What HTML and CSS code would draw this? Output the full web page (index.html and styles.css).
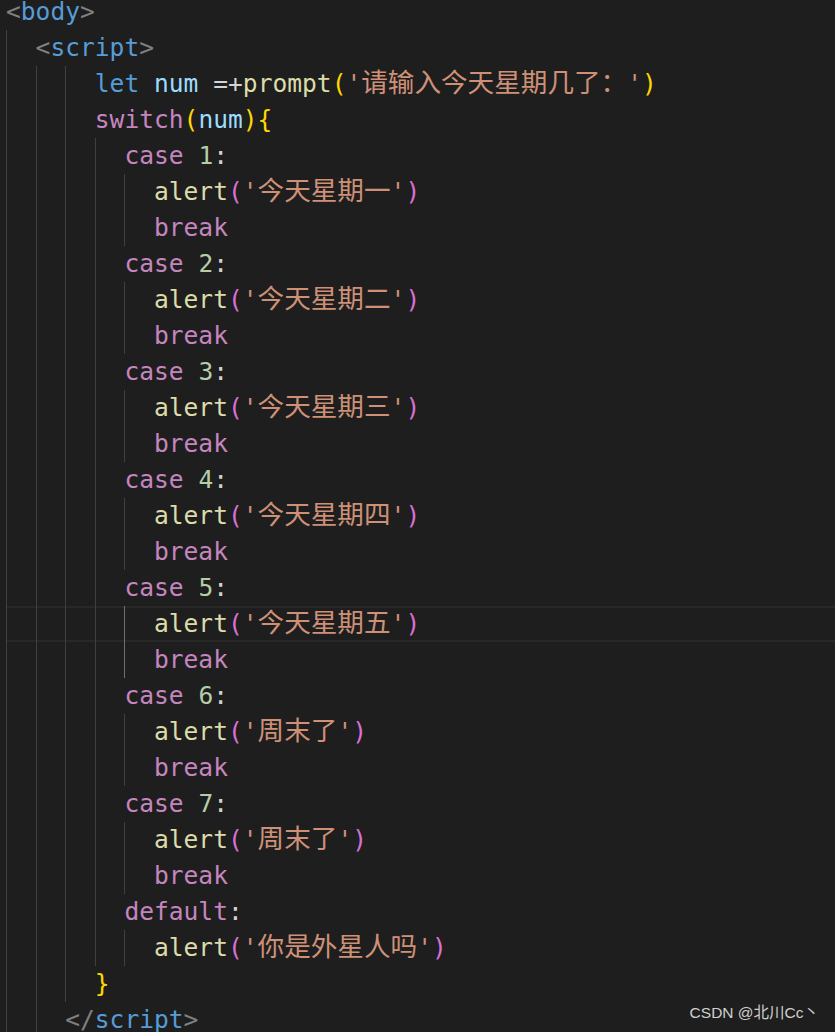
FILE: index.html
```html
<!DOCTYPE html>
<html>
<head>
<meta charset="utf-8">
<link rel="stylesheet" href="styles.css">
</head>
<body>
<div class="editor">
  <div class="ln"><span class="pu">&lt;</span><span class="tg">body</span><span class="pu">&gt;</span></div>
  <div class="ln"><span class="ig"></span><span class="pu">&lt;</span><span class="tg">script</span><span class="pu">&gt;</span></div>
  <div class="ln"><span class="ig"></span><span class="ig"></span><span class="ig"></span><span class="kw">let</span> <span class="vr">num</span> <span class="op">=+</span><span class="fn">prompt</span><span class="b1">(</span><span class="st">'<span class="cjk">请输入今天星期几了：</span>'</span><span class="b1">)</span></div>
  <div class="ln"><span class="ig"></span><span class="ig"></span><span class="ig"></span><span class="ck">switch</span><span class="b1">(</span><span class="vr">num</span><span class="b1">)</span><span class="b1">{</span></div>
  <div class="ln"><span class="ig"></span><span class="ig"></span><span class="ig"></span><span class="ig"></span><span class="ck">case</span> <span class="nm">1</span><span class="op">:</span></div>
  <div class="ln"><span class="ig"></span><span class="ig"></span><span class="ig"></span><span class="ig"></span><span class="ig"></span><span class="fn">alert</span><span class="b2">(</span><span class="st">'<span class="cjk">今天星期一</span>'</span><span class="b2">)</span></div>
  <div class="ln"><span class="ig"></span><span class="ig"></span><span class="ig"></span><span class="ig"></span><span class="ig"></span><span class="ck">break</span></div>
  <div class="ln"><span class="ig"></span><span class="ig"></span><span class="ig"></span><span class="ig"></span><span class="ck">case</span> <span class="nm">2</span><span class="op">:</span></div>
  <div class="ln"><span class="ig"></span><span class="ig"></span><span class="ig"></span><span class="ig"></span><span class="ig"></span><span class="fn">alert</span><span class="b2">(</span><span class="st">'<span class="cjk">今天星期二</span>'</span><span class="b2">)</span></div>
  <div class="ln"><span class="ig"></span><span class="ig"></span><span class="ig"></span><span class="ig"></span><span class="ig"></span><span class="ck">break</span></div>
  <div class="ln"><span class="ig"></span><span class="ig"></span><span class="ig"></span><span class="ig"></span><span class="ck">case</span> <span class="nm">3</span><span class="op">:</span></div>
  <div class="ln"><span class="ig"></span><span class="ig"></span><span class="ig"></span><span class="ig"></span><span class="ig"></span><span class="fn">alert</span><span class="b2">(</span><span class="st">'<span class="cjk">今天星期三</span>'</span><span class="b2">)</span></div>
  <div class="ln"><span class="ig"></span><span class="ig"></span><span class="ig"></span><span class="ig"></span><span class="ig"></span><span class="ck">break</span></div>
  <div class="ln"><span class="ig"></span><span class="ig"></span><span class="ig"></span><span class="ig"></span><span class="ck">case</span> <span class="nm">4</span><span class="op">:</span></div>
  <div class="ln"><span class="ig"></span><span class="ig"></span><span class="ig"></span><span class="ig"></span><span class="ig"></span><span class="fn">alert</span><span class="b2">(</span><span class="st">'<span class="cjk">今天星期四</span>'</span><span class="b2">)</span></div>
  <div class="ln"><span class="ig"></span><span class="ig"></span><span class="ig"></span><span class="ig"></span><span class="ig"></span><span class="ck">break</span></div>
  <div class="ln"><span class="ig"></span><span class="ig"></span><span class="ig"></span><span class="ig"></span><span class="ck">case</span> <span class="nm">5</span><span class="op">:</span></div>
  <div class="ln cur"><span class="ig"></span><span class="ig"></span><span class="ig"></span><span class="ig"></span><span class="ig act"></span><span class="fn">alert</span><span class="b2">(</span><span class="st">'<span class="cjk">今天星期五</span>'</span><span class="b2">)</span></div>
  <div class="ln"><span class="ig"></span><span class="ig"></span><span class="ig"></span><span class="ig"></span><span class="ig act"></span><span class="ck">break</span></div>
  <div class="ln"><span class="ig"></span><span class="ig"></span><span class="ig"></span><span class="ig"></span><span class="ck">case</span> <span class="nm">6</span><span class="op">:</span></div>
  <div class="ln"><span class="ig"></span><span class="ig"></span><span class="ig"></span><span class="ig"></span><span class="ig"></span><span class="fn">alert</span><span class="b2">(</span><span class="st">'<span class="cjk">周末了</span>'</span><span class="b2">)</span></div>
  <div class="ln"><span class="ig"></span><span class="ig"></span><span class="ig"></span><span class="ig"></span><span class="ig"></span><span class="ck">break</span></div>
  <div class="ln"><span class="ig"></span><span class="ig"></span><span class="ig"></span><span class="ig"></span><span class="ck">case</span> <span class="nm">7</span><span class="op">:</span></div>
  <div class="ln"><span class="ig"></span><span class="ig"></span><span class="ig"></span><span class="ig"></span><span class="ig"></span><span class="fn">alert</span><span class="b2">(</span><span class="st">'<span class="cjk">周末了</span>'</span><span class="b2">)</span></div>
  <div class="ln"><span class="ig"></span><span class="ig"></span><span class="ig"></span><span class="ig"></span><span class="ig"></span><span class="ck">break</span></div>
  <div class="ln"><span class="ig"></span><span class="ig"></span><span class="ig"></span><span class="ig"></span><span class="ck">default</span><span class="op">:</span></div>
  <div class="ln"><span class="ig"></span><span class="ig"></span><span class="ig"></span><span class="ig"></span><span class="ig"></span><span class="fn">alert</span><span class="b2">(</span><span class="st">'<span class="cjk">你是外星人吗</span>'</span><span class="b2">)</span></div>
  <div class="ln"><span class="ig"></span><span class="ig"></span><span class="ig"></span><span class="b1">}</span></div>
  <div class="ln"><span class="ig"></span><span class="ig"></span><span class="pu">&lt;/</span><span class="tg">script</span><span class="pu">&gt;</span></div>
</div>
<div class="mark">CSDN @北川Cc丶</div>
</body>
</html>
```
FILE: styles.css
```css
html, body {
  margin: 0;
  padding: 0;
  background: #1e1e1e;
  overflow: hidden;
  height: 1032px;
}
.editor {
  margin-top: -6px;
  padding-left: 6px;
  font-family: "DejaVu Sans Mono", monospace;
  font-size: 24.58px;
  color: #d4d4d4;
}
.ln {
  display: block;
  white-space: pre;
  height: 36px;
  line-height: 36px;
  overflow: visible;
}
.ln.cur {
  box-shadow: inset 0 2px 0 #282828, inset 0 -2px 0 #282828;
}
.ig {
  display: inline-block;
  vertical-align: top;
  width: 2ch;
  height: 36px;
  box-sizing: border-box;
  border-left: 1px solid #404040;
}
.ig.act {
  border-left-color: #707070;
}
.pu { color: #808080; }
.tg { color: #569cd6; }
.kw { color: #569cd6; }
.vr { color: #9cdcfe; }
.op { color: #d4d4d4; }
.fn { color: #dcdcaa; }
.st { color: #ce9178; }
.ck { color: #c586c0; }
.nm { color: #b5cea8; }
.b1 { color: #ffd700; }
.b2 { color: #da70d6; }
.cjk {
  font-family: "Noto Sans CJK SC", sans-serif;
  font-size: 26.6px;
  line-height: 1;
}
.mark {
  position: absolute;
  right: 16px;
  bottom: 10px;
  font-family: "Liberation Sans", "Noto Sans CJK SC", sans-serif;
  font-size: 15.5px;
  color: #cfcfcf;
}
```
